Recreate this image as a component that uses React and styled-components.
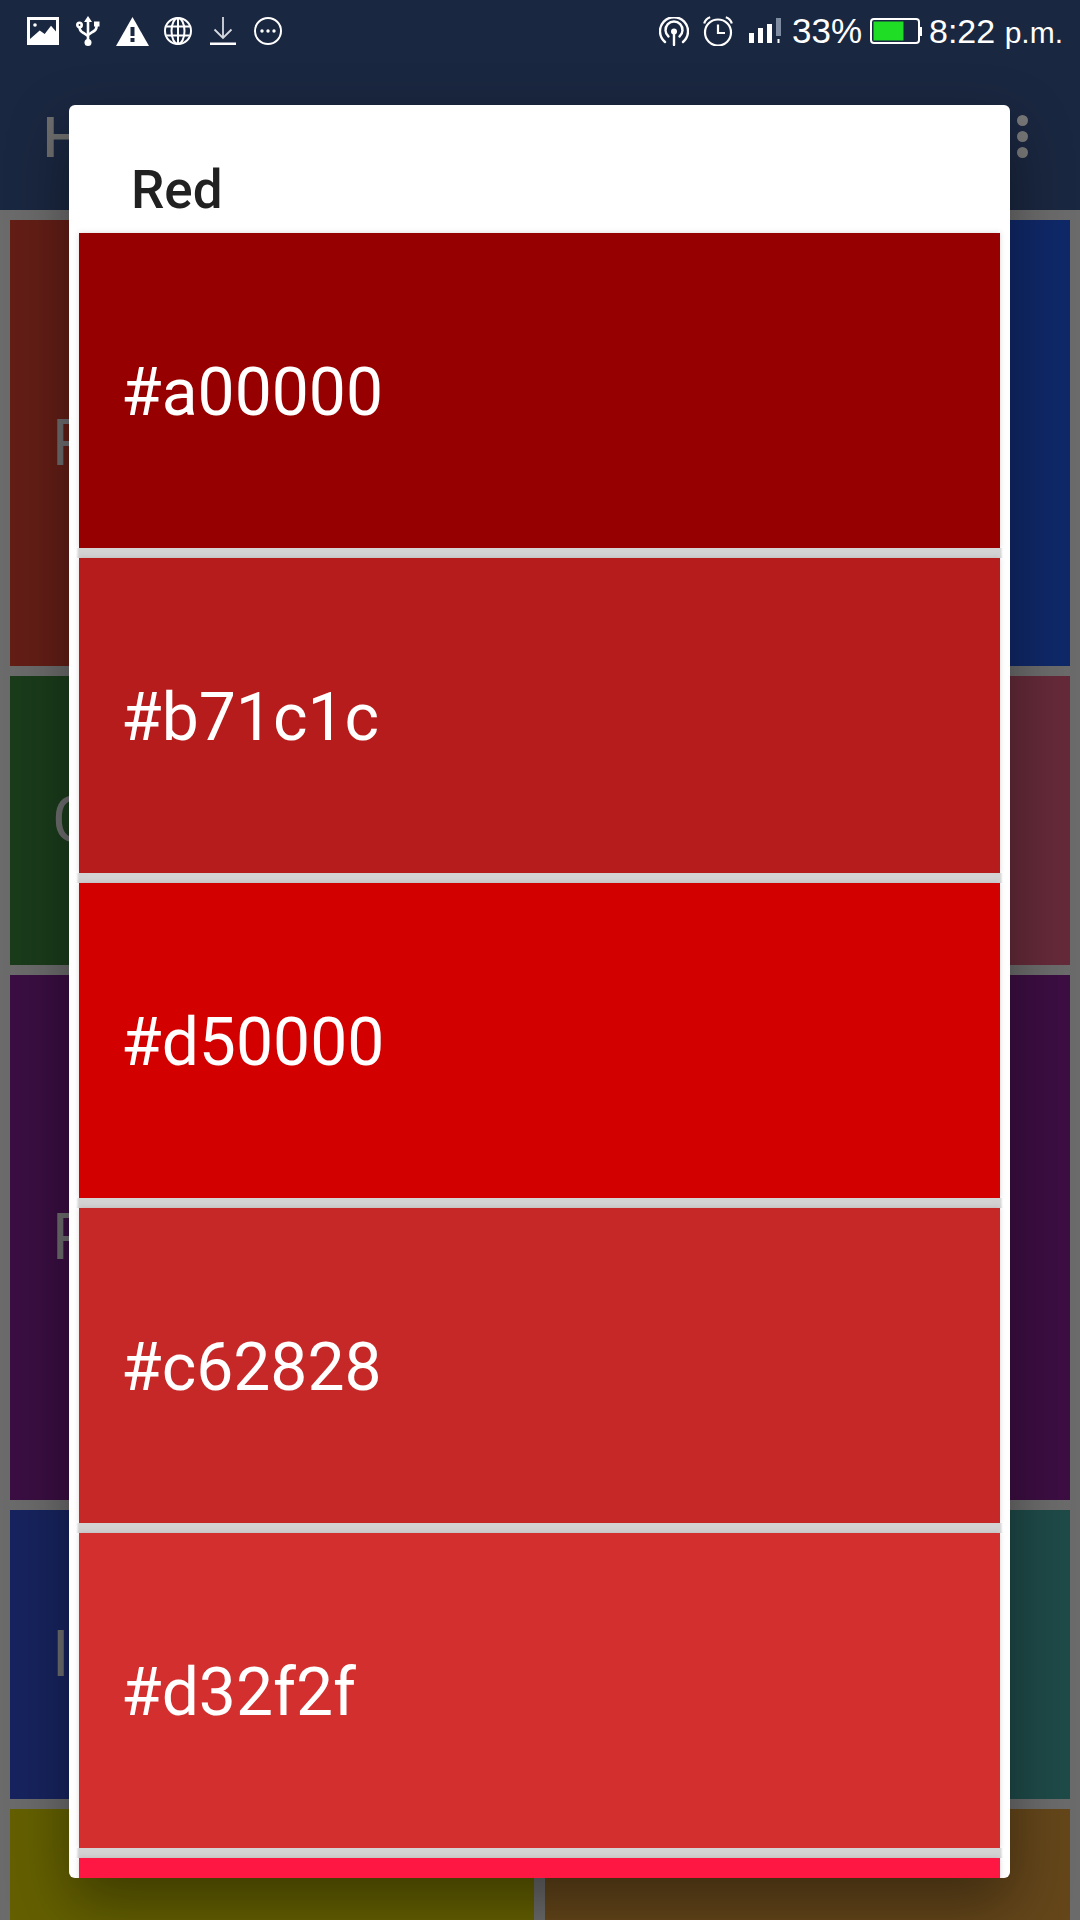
import styled, { createGlobalStyle } from "styled-components"

const tiles = [
    { bg: "#631e16", label: "R" },
    { bg: "#0f2868" },
    { bg: "#1a3c1b", label: "G" },
    { bg: "#652a3a" },
    { bg: "#3a0e42", label: "P" },
    { bg: "#3c0e42" },
    { bg: "#17235e", label: "I" },
    { bg: "#1e4a48" },
    { bg: "#646000" },
    { bg: "#64461a" },
]

const shades = [
    { hex: "#a00000", bg: "#960000" },
    { hex: "#b71c1c", bg: "#b71c1c" },
    { hex: "#d50000", bg: "#d30000" },
    { hex: "#c62828", bg: "#c62828" },
    { hex: "#d32f2f", bg: "#d32f2f" },
    { bg: "#ff1744" },
]

export default function App() {
    return (
        <>
            <GlobalStyle />
            <Screen>
                <TopBar>
                    <StatusBar>
                        <StatusGroup>
                            <ImageIcon />
                            <UsbIcon />
                            <WarningIcon />
                            <GlobeIcon />
                            <DownloadIcon />
                            <MoreCircleIcon />
                        </StatusGroup>
                        <StatusGroup>
                            <HotspotIcon />
                            <AlarmIcon />
                            <SignalIcon />
                            <Percent>33%</Percent>
                            <BatteryIcon />
                            <Clock>
                                8:22 <small>p.m.</small>
                            </Clock>
                        </StatusGroup>
                    </StatusBar>
                    <AppBar>
                        <AppTitle>H</AppTitle>
                        <MenuDots>
                            <span />
                            <span />
                            <span />
                        </MenuDots>
                    </AppBar>
                </TopBar>
                <TileGrid>
                    {tiles.map((tile, i) => (
                        <Tile key={i} $bg={tile.bg}>
                            {tile.label}
                        </Tile>
                    ))}
                </TileGrid>
                <Dialog>
                    <DialogTitle>Red</DialogTitle>
                    {shades.map((shade, i) => (
                        <div key={shade.bg}>
                            {i > 0 && <Divider />}
                            <Swatch $bg={shade.bg}>{shade.hex}</Swatch>
                        </div>
                    ))}
                </Dialog>
            </Screen>
        </>
    )
}

function ImageIcon() {
    return (
        <svg width="32" height="28" viewBox="0 0 32 28">
            <path fill="#fff" fillRule="evenodd" d="M0 0h32v28H0zM3 3v19l9.700-8.500 5 3.500 6.300-8.300L29 14.500V3z" />
            <circle cx="8" cy="8" r="1.800" fill="#fff" />
        </svg>
    )
}

function UsbIcon() {
    return (
        <StatusSvg $left={17} width="24" height="30" viewBox="0 0 24 30">
            <g fill="none" stroke="#fff" strokeWidth="2.600">
                <path d="M12 4v22" />
                <path d="M3.500 11c0 4 2 5 4 6l4.500 3" />
                <path d="M20.500 9v2c0 3-2 4-4 5l-4.500 3" />
                <circle cx="3.500" cy="9" r="2.200" />
            </g>
            <path fill="#fff" d="M12 0l4 6H8z" />
            <rect x="18" y="5.500" width="5.500" height="5" fill="#fff" />
            <circle cx="12" cy="26.500" r="3.500" fill="#fff" />
        </StatusSvg>
    )
}

function WarningIcon() {
    return (
        <StatusSvg $left={16} width="33" height="29" viewBox="0 0 33 29">
            <path fill="#fff" d="M16.500 0L33 29H0z" />
            <rect x="14.500" y="10" width="4" height="9" fill="#1a2740" />
            <rect x="14.500" y="21" width="4" height="4" fill="#1a2740" />
        </StatusSvg>
    )
}

function GlobeIcon() {
    return (
        <StatusSvg $left={15} width="28" height="28" viewBox="0 0 28 28">
            <g fill="none" stroke="#fff" strokeWidth="2">
                <circle cx="14" cy="14" r="13" />
                <ellipse cx="14" cy="14" rx="6.500" ry="13" />
                <path d="M2.500 9.500h23M2.500 18.500h23M14 1v26" />
            </g>
        </StatusSvg>
    )
}

function DownloadIcon() {
    return (
        <StatusSvg $left={18} width="26" height="28" viewBox="0 0 26 28">
            <path fill="none" stroke="#d5d9e0" strokeWidth="1.800" d="M13 0v21M4.500 12.500L13 21l8.500-8.500" />
            <rect y="25.500" width="26" height="2.500" fill="#fff" />
        </StatusSvg>
    )
}

function MoreCircleIcon() {
    return (
        <StatusSvg $left={18} width="28" height="28" viewBox="0 0 28 28">
            <circle cx="14" cy="14" r="13" fill="none" stroke="#fff" strokeWidth="2" />
            <circle cx="8" cy="14" r="1.700" fill="#fff" />
            <circle cx="14" cy="14" r="1.700" fill="#fff" />
            <circle cx="20" cy="14" r="1.700" fill="#fff" />
        </StatusSvg>
    )
}

function HotspotIcon() {
    return (
        <svg width="30" height="29" viewBox="0 0 30 29">
            <g fill="none" stroke="#fff" strokeWidth="2.400" strokeLinecap="round">
                <path d="M6 25A14 14 0 1 1 24 25" />
                <path d="M9.500 19.500A8.500 8.500 0 1 1 20.500 19.500" />
                <path d="M15 15v13" />
            </g>
            <circle cx="15" cy="14.500" r="3" fill="#fff" />
        </svg>
    )
}

function AlarmIcon() {
    return (
        <StatusSvg $left={14} width="30" height="30" viewBox="0 0 30 30">
            <g fill="none" stroke="#fff" strokeWidth="2.200">
                <circle cx="15" cy="16.500" r="13" />
                <path d="M15 8.500v8.500h7" />
                <path d="M1.200 7.500C2.200 4 4.200 2 7.200 1.200M28.800 7.500C27.800 4 25.800 2 22.800 1.200" />
            </g>
        </StatusSvg>
    )
}

function SignalIcon() {
    return (
        <StatusSvg $left={16} width="33" height="26" viewBox="0 0 33 26">
            <rect x="0" y="15" width="5" height="10" fill="#fff" />
            <rect x="9" y="10" width="5" height="15" fill="#fff" />
            <rect x="18" y="6" width="5" height="19" fill="#fff" />
            <rect x="27" y="0" width="5" height="18" fill="#7f8ba0" />
            <rect x="28.500" y="21" width="2" height="4" fill="#fff" />
        </StatusSvg>
    )
}

function BatteryIcon() {
    return (
        <StatusSvg $left={8} width="52" height="26" viewBox="0 0 52 26">
            <rect x="1" y="1" width="48" height="24" rx="3" fill="none" stroke="#fff" strokeWidth="2" />
            <rect x="3.500" y="3.500" width="30" height="19" fill="#1fdc24" />
            <rect x="49" y="9" width="3" height="9" fill="#fff" />
        </StatusSvg>
    )
}

const GlobalStyle = createGlobalStyle`
body {
    margin: 0;
    background: #1a2740;
}
`

const Screen = styled.div`
position: relative;
width: 1080px;
height: 1920px;
overflow: hidden;
background: #6b6b6b;
font-family: 'Roboto', sans-serif;
`

const TopBar = styled.div`
height: 210px;
background: #1a2740;
`

const StatusBar = styled.div`
display: flex;
justify-content: space-between;
align-items: center;
height: 62px;
padding: 0 17px 0 27px;
`

const StatusGroup = styled.div`
display: flex;
align-items: center;
`

const StatusSvg = styled.svg`
margin-left: ${(props) => props.$left}px;
`

const Percent = styled.span`
margin-left: 10px;
font-family: 'Liberation Sans', sans-serif;
font-size: 35px;
color: #FFFFFF;
`

const Clock = styled.span`
margin-left: 7px;
font-family: 'Liberation Sans', sans-serif;
font-size: 34px;
color: #FFFFFF;

    small{
        font-size: 30px;
    }
`

const AppBar = styled.div`
display: flex;
justify-content: space-between;
align-items: center;
height: 148px;
padding: 4px 52px 0 43px;
box-sizing: border-box;
`

const AppTitle = styled.h1`
margin: 0;
font-size: 55px;
font-weight: 500;
color: #6e6e6e;
`

const MenuDots = styled.div`
display: flex;
flex-direction: column;
gap: 5px;
margin-top: -4px;

    span{
        width: 11px;
        height: 11px;
        border-radius: 50%;
        background: #7a7a7a;
    }
`

const TileGrid = styled.div`
display: grid;
grid-template-columns: 524px 525px;
grid-template-rows: 446px 289px 525px 289px 121px;
column-gap: 11px;
row-gap: 10px;
padding: 10px;
`

const Tile = styled.div`
display: flex;
align-items: center;
padding-left: 42px;
font-size: 64px;
color: #6e6e70;
background: ${(props) => props.$bg};
`

const Dialog = styled.div`
position: absolute;
top: 105px;
left: 69px;
width: 941px;
height: 1773px;
overflow: hidden;
border-radius: 6px;
background: #FFFFFF;
box-shadow: 0 24px 60px rgba(0, 0, 0, 0.4);
`

const DialogTitle = styled.h2`
box-sizing: border-box;
display: flex;
align-items: flex-end;
height: 128px;
margin: 0;
padding: 0 0 13px 62px;
font-size: 53px;
line-height: 60px;
font-weight: 500;
color: #212121;
`

const Divider = styled.div`
height: 10px;
margin: 0 7px;
background: linear-gradient(90deg, #FFFFFF, #d3d3d3 3px, #d3d3d3 calc(100% - 3px), #FFFFFF);
`

const Swatch = styled.div`
box-sizing: border-box;
display: flex;
align-items: center;
height: 315px;
margin: 0 10px;
padding: 4px 0 0 42px;
font-size: 66px;
color: #FFFFFF;
background: ${(props) => props.$bg};
box-shadow: 0 0 5px rgba(120, 90, 90, 0.25);
`
